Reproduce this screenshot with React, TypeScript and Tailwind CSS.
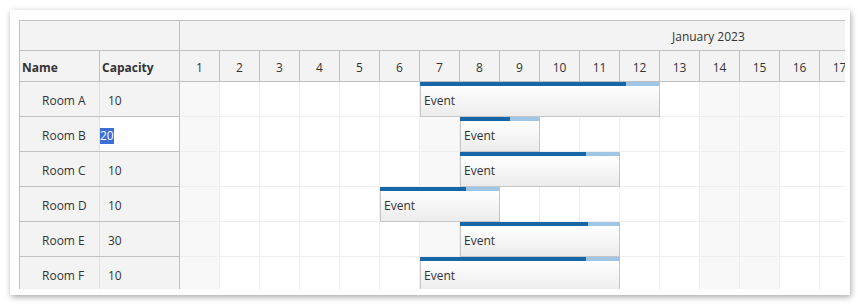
import React from "react";

// rooms shown in the scheduler rows
const rooms = [
  { name: "Room A", capacity: "10" },
  { name: "Room B", capacity: "20", editing: true },
  { name: "Room C", capacity: "10" },
  { name: "Room D", capacity: "10" },
  { name: "Room E", capacity: "30" },
  { name: "Room F", capacity: "10" },
];

// start day, length in days, completed px of the bar
const events: Record<number, { start: number; days: number; done: number }> = {
  0: { start: 7, days: 6, done: 206 },
  1: { start: 8, days: 2, done: 50 },
  2: { start: 8, days: 4, done: 126 },
  3: { start: 6, days: 3, done: 86 },
  4: { start: 8, days: 4, done: 128 },
  5: { start: 7, days: 5, done: 166 },
};

const days = Array.from({ length: 17 }, (_, i) => i + 1);
const weekend = (d: number) => d % 7 === 0 || d % 7 === 1;

export default function App() {
  return (
    <div className="h-[305px] w-[860px] bg-white pl-[10px] pt-[10px] font-['Open_Sans',sans-serif] text-[12px] text-[#333]">
      <div className="h-[285px] w-[840px] bg-white pl-[9px] pr-[5px] pt-[10px] shadow-[1px_2px_6px_rgba(0,0,0,0.35)]">
        <div className="flex h-[269px] w-[826px] overflow-hidden border-l border-t border-[#c0c0c0]">
          {/* row headers */}
          <div className="w-[160px] shrink-0 border-r border-[#c0c0c0] bg-[#f3f3f3]">
            <div className="h-[30px] border-b border-[#c0c0c0]" />
            <div className="flex h-[31px] border-b border-[#c0c0c0] font-bold">
              <div className="flex w-[80px] items-center border-r border-[#c0c0c0] pl-[2px] pt-[3px]">Name</div>
              <div className="flex flex-1 items-center pl-[2px] pt-[3px]">Capacity</div>
            </div>
            {rooms.map((r) => (
              <div key={r.name} className="flex h-[35px] border-b border-[#c0c0c0]">
                <div className="flex w-[80px] items-center border-r border-[#e0e0e0] pl-[22px] pt-[3px]">{r.name}</div>
                {r.editing ? (
                  <div className="flex flex-1 items-center bg-white pt-[3px]">
                    <span className="bg-[#3b6fd6] leading-[16px] text-white">{r.capacity}</span>
                  </div>
                ) : (
                  <div className="flex flex-1 items-center pl-[8px] pt-[3px]">{r.capacity}</div>
                )}
              </div>
            ))}
          </div>

          {/* timeline */}
          <div className="flex-1 overflow-hidden">
            <div className="flex h-[30px] w-[680px] items-center border-b border-[#c0c0c0] bg-[#f3f3f3] pl-[492px] pt-[3px]">
              January 2023
            </div>
            <div className="flex h-[31px] w-[680px] border-b border-[#c0c0c0] bg-[#f3f3f3]">
              {days.map((d) => (
                <div key={d} className="flex w-[40px] shrink-0 items-center justify-center border-r border-[#c0c0c0] pt-[3px]">
                  {d}
                </div>
              ))}
            </div>
            {rooms.map((r, i) => {
              const ev = events[i];
              return (
                <div key={r.name} className="relative flex h-[35px] w-[680px]">
                  {days.map((d) => (
                    <div
                      key={d}
                      className={`w-[40px] shrink-0 border-b border-r border-[#eeeeee] ${weekend(d) ? "bg-[#f8f8f8]" : "bg-white"}`}
                    />
                  ))}
                  <div
                    className="absolute top-0 flex h-[35px] flex-col"
                    style={{ left: (ev.start - 1) * 40, width: ev.days * 40 }}
                  >
                    <div className="flex h-[4px] bg-[#9fc6e7]">
                      <div className="h-full bg-[#1766a8]" style={{ width: ev.done }} />
                    </div>
                    <div className="flex flex-1 items-center border-x border-b border-[#c6c6c6] bg-gradient-to-b from-white to-[#ececec] pl-[3px]">
                      Event
                    </div>
                  </div>
                </div>
              );
            })}
          </div>
        </div>
      </div>
    </div>
  );
}
